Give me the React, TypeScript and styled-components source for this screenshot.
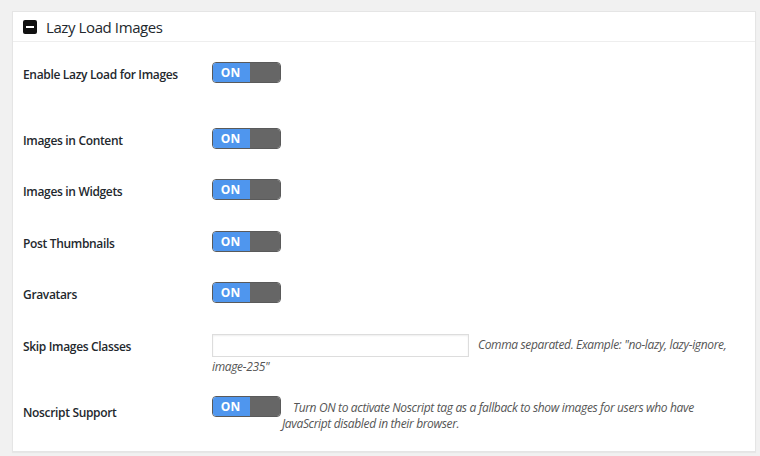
import React from "react";
import styled, { createGlobalStyle } from "styled-components";

const Global = createGlobalStyle`
  html, body { margin: 0; padding: 0; background: #f1f1f1; }
  body { font-family: "Open Sans", "Noto Sans", sans-serif; color: #23282d; }
`;

const Page = styled.div`
  padding: 11px 4px 4px 12px;
`;

const Panel = styled.section`
  background: #fff;
  border: 1px solid #e5e5e5;
  box-shadow: 0 1px 1px rgba(0,0,0,0.04);
  width: 744px;
  height: 441px;
  box-sizing: border-box;
`;

const Header = styled.header`
  display: flex;
  align-items: center;
  gap: 9px;
  height: 29px;
  padding: 0 10px;
  border-bottom: 1px solid #eee;
`;

const Icon = styled.span`
  width: 14px;
  height: 14px;
  border-radius: 2px;
  background: #111;
  display: flex;
  align-items: center;
  justify-content: center;
  &::after {
    content: "";
    width: 8px;
    height: 2px;
    background: #fff;
  }
`;

const Title = styled.h2`
  margin: 0;
  font-size: 15px;
  font-weight: 400;
  letter-spacing: -0.4px;
  color: #23282d;
`;

const Body = styled.div`
  padding: 20px 10px 0 10px;
  display: flex;
  flex-direction: column;
`;

const Row = styled.div<{ $h: number }>`
  display: grid;
  grid-template-columns: 189px 1fr;
  align-items: start;
  height: ${(p) => p.$h}px;
`;

const Label = styled.div<{ $pt?: number }>`
  font-size: 12px;
  font-weight: 600;
  letter-spacing: -0.33px;
  color: #23282d;
  line-height: 21px;
  padding-top: ${(p) => p.$pt ?? 2}px;
`;

const Toggle = styled.div`
  width: 69px;
  height: 21px;
  border-radius: 4px;
  box-sizing: border-box;
  border: 1px solid #5a5a5a;
  display: flex;
  overflow: hidden;
  flex-shrink: 0;
`;

const On = styled.span`
  width: 37px;
  background: #4f96ee;
  color: #fff;
  font-size: 12px;
  font-weight: 700;
  display: flex;
  align-items: center;
  justify-content: center;
  padding-right: 2px;
  box-sizing: border-box;
`;

const Off = styled.span`
  flex: 1;
  background: #666;
`;

const Flow = styled.div`
  font-size: 12px;
  line-height: 20px;
`;

const Input = styled.input`
  width: 257px;
  height: 23px;
  box-sizing: border-box;
  border: 1px solid #ddd;
  box-shadow: inset 0 1px 2px rgba(0,0,0,0.07);
  vertical-align: middle;
  margin: 0 9px 0 0;
`;

const Desc = styled.span`
  font-style: italic;
  color: #555;
  font-size: 12px;
  letter-spacing: -0.35px;
`;

const NoscriptCell = styled.div`
  display: flex;
  align-items: flex-start;
`;

const Para = styled.p`
  margin: 4px 0 0 1px;
  font-style: italic;
  color: #555;
  font-size: 12px;
  letter-spacing: -0.35px;
  line-height: 16px;
  text-indent: 11px;
  width: 440px;
`;

function Switch() {
  return (
    <Toggle>
      <On>ON</On>
      <Off />
    </Toggle>
  );
}

export default function App() {
  return (
    <Page>
      <Global />
      <Panel>
        <Header>
          <Icon />
          <Title>Lazy Load Images</Title>
        </Header>
        <Body>
          <Row $h={66}>
            <Label>Enable Lazy Load for Images</Label>
            <Switch />
          </Row>
          <Row $h={51}>
            <Label>Images in Content</Label>
            <Switch />
          </Row>
          <Row $h={52}>
            <Label>Images in Widgets</Label>
            <Switch />
          </Row>
          <Row $h={51}>
            <Label>Post Thumbnails</Label>
            <Switch />
          </Row>
          <Row $h={52}>
            <Label>Gravatars</Label>
            <Switch />
          </Row>
          <Row $h={62}>
            <Label $pt={2}>Skip Images Classes</Label>
            <Flow>
              <Input type="text" />
              <Desc>Comma separated. Example: "no-lazy, lazy-ignore, image-235"</Desc>
            </Flow>
          </Row>
          <Row $h={50}>
            <Label $pt={6}>Noscript Support</Label>
            <NoscriptCell>
              <Switch />
              <Para>
                Turn ON to activate Noscript tag as a fallback to show images for users who have JavaScript disabled in their browser.
              </Para>
            </NoscriptCell>
          </Row>
        </Body>
      </Panel>
    </Page>
  );
}
